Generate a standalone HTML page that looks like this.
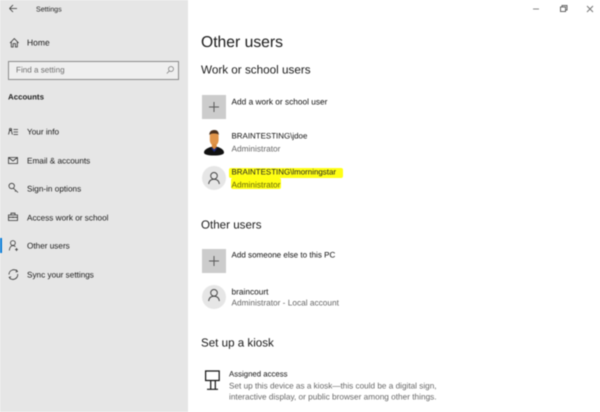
<!DOCTYPE html>
<html><head><meta charset="utf-8"><style>
html,body{margin:0;padding:0;width:600px;height:412px;overflow:hidden;background:#fff}
#r{position:relative;width:600px;height:412px;overflow:hidden;font-family:"Liberation Sans",sans-serif;filter:blur(.4px);text-rendering:geometricPrecision}
.t{position:absolute;white-space:nowrap;line-height:12px;font-size:8.3px;color:#111;transform:translateY(-5.3px)}
.n{left:27px;font-size:8.2px;color:#1a1a1a}
.s{color:#666}
.h{left:201px;font-size:11.6px;color:#1a1a1a;line-height:14px;transform:translateY(-6.3px)}
.u{font-size:7.95px}
.b{position:absolute}
svg{position:absolute;overflow:visible;fill:none}
</style></head><body><div id="r">
<div class="b" style="left:0;top:0;width:188px;height:412px;background:#e6e6e6"></div>
<svg style="left:0;top:0" width="188" height="300" stroke="#333" stroke-width="0.8">
<path d="M9.5 8.5H17M9.5 8.5L13 5M9.5 8.5L13 12"/>
<path d="M10 43L14.3 38.6L18.6 43M11.3 42V47H13.2V43.5H15.4V47H17.3V42"/>
<path d="M8.5 134.5L9.7 130H11.2L12.4 134.5M9.4 129.5a1.1 1.1 0 1 0 2.2 0a1.1 1.1 0 1 0-2.2 0M13.5 129.5H18M13.5 132H18M13.5 134.5H18"/>
<path d="M8.5 157.5H17.5V163.5H8.5ZM8.5 157.5L13 161L17.5 157.5"/>
<path d="M9 186a2.7 2.7 0 1 0 5.4 0a2.7 2.7 0 1 0-5.4 0M13.6 188.5L18 192.5M16 190.5L15 191.5"/>
<path d="M8.5 215H17.5V220.5H8.5ZM11 215V213.2H15V215M8.5 217.3H17.5M13 216.6V218"/>
<path d="M10.5 243a2.4 2.4 0 1 0 4.8 0a2.4 2.4 0 1 0-4.8 0M9.3 250.5C9.6 247.5 11 245.6 13 245.6C14 245.6 14.8 246 15.4 246.8M15 249.5H18M16.5 248V251"/>
<path d="M9 274.5A4.8 4.8 0 0 1 17 271M17.7 274A4.8 4.8 0 0 1 9.6 278M16.2 269.8L17.5 271.5L15.6 272M10.5 279L9.2 277.3L11.1 276.8"/>
</svg>
<div class="t" style="left:36px;top:9px;font-size:7.1px;color:#222">Settings</div>
<div class="t n" style="top:42px;font-size:8.5px">Home</div>
<div class="b" style="left:8px;top:61px;width:169px;height:17px;background:#efefef;border:1px solid #8c8c8c"></div>
<div class="t" style="left:16px;top:69.5px;color:#6e6e6e;font-size:8.1px">Find a setting</div>
<svg style="left:0;top:0" width="188" height="90" stroke="#777" stroke-width="0.7"><path d="M168.5 69a2.5 2.5 0 1 0 5 0a2.5 2.5 0 1 0-5 0M169.3 71L166.8 73.5"/></svg>
<div class="t" style="left:8px;top:97px;font-size:7.9px;font-weight:bold;color:#222">Accounts</div>
<div class="t n" style="top:132px">Your info</div>
<div class="t n" style="top:160.5px">Email &amp; accounts</div>
<div class="t n" style="top:189px">Sign-in options</div>
<div class="t n" style="top:217.5px">Access work or school</div>
<div class="t n" style="top:246px">Other users</div>
<div class="t n" style="top:274.5px">Sync your settings</div>
<div class="b" style="left:0;top:238px;width:1.5px;height:15px;background:#0078d7"></div>

<svg style="left:500px;top:0" width="100" height="20" stroke="#666" stroke-width="1">
<path d="M33 9H39" stroke="#888"/><path d="M60.5 7H65.5V11.5H60.5ZM62 7V5.5H67V10H65.5"/><path d="M87 6L93 12M93 6L87 12" stroke="#777"/></svg>

<div class="t h" style="top:42px;font-size:15.7px;line-height:20px;transform:translateY(-9px)">Other users</div>
<div class="t h" style="top:70px;font-size:11.7px">Work or school users</div>

<div class="b" style="left:202px;top:95px;width:24px;height:24px;background:#cccccc"></div>
<div class="b" style="left:202px;top:249px;width:24px;height:24px;background:#cccccc"></div>
<div class="b" style="left:202px;top:285px;width:24px;height:24px;border-radius:50%;background:#e6e6e6"></div>
<svg style="left:0;top:0" width="600" height="412" stroke="#5a5a5a" stroke-width="1"><path d="M209 107H219M214 102V112"/><path d="M209 261H219M214 256V266"/></svg>
<div class="t" style="left:231.5px;top:100.5px">Add a work or school user</div>

<svg style="left:0;top:0" width="240" height="170" stroke="none">
<path d="M204 152.5C204 149.5 208 148 210.5 147H218C220.5 148 224 149.5 224 152.5C224 154.5 220 155.5 214 155.5C208 155.5 204 154.5 204 152.5Z" fill="#111"/>
<path d="M211 148L214.2 152L217.5 148Z" fill="#1f2a78"/>
<path d="M209.3 135C209.3 131 212 130 214.5 130C217 130 218.8 131.5 218.8 135L217.5 134H211Z" fill="#4a2f1c"/>
<path d="M209.8 135.5C210.5 133.5 212 133.5 214.2 133.5C216.5 133.5 218 133.8 218.6 135.5V140C218.6 143 216.5 146 214.2 146C212 146 209.8 143 209.8 140Z" fill="#e0944a"/>
<path d="M211.5 146.5L214.2 149.5L217 146.5L216 144H212.5Z" fill="#d98a3e"/>
</svg>
<div class="t u" style="left:231.5px;top:136px">BRAINTESTING\jdoe</div>
<div class="t s" style="left:231.5px;top:147.5px">Administrator</div>

<div class="b" style="left:229px;top:168px;width:114px;height:10px;background:#ffff14;border-radius:2px"></div>
<div class="b" style="left:231px;top:177.5px;width:50px;height:11.5px;background:#ffff14;border-radius:2px"></div>
<div class="b" style="left:202px;top:166px;width:24px;height:24px;border-radius:50%;background:#e6e6e6"></div>
<svg style="left:0;top:0" width="240" height="320" stroke="#444" stroke-width="1"><path d="M210.7 175.8a3.3 3.3 0 1 0 6.6 0a3.3 3.3 0 1 0-6.6 0M208.6 184C209 181 211 179.3 214 179.3C217 179.3 219 181 219.4 184"/><path d="M210.7 292.8a3.3 3.3 0 1 0 6.6 0a3.3 3.3 0 1 0-6.6 0M208.6 301C209 298 211 296.3 214 296.3C217 296.3 219 298 219.4 301"/></svg>
<div class="t u" style="left:231.5px;top:172px;color:#222">BRAINTESTING\lmorningstar</div>
<div class="t" style="left:231.5px;top:183.5px;color:#6b6b0a">Administrator</div>

<div class="t h" style="top:224.5px">Other users</div>
<div class="t" style="left:231.5px;top:255px;font-size:8.05px">Add someone else to this PC</div>
<div class="t" style="left:231.5px;top:291px">braincourt</div>
<div class="t s" style="left:231.5px;top:302px">Administrator - Local account</div>

<div class="t h" style="top:343px">Set up a kiosk</div>
<svg style="left:0;top:0" width="240" height="412" stroke="#111" stroke-width="1.2"><path d="M205.6 371H219.2V380.5H205.6ZM210.7 380.5V389M215.3 380.5V389M207 389.3H218"/></svg>
<div class="t" style="left:229px;top:374px;font-size:7.8px">Assigned access</div>
<div class="t s" style="left:229px;top:385.5px;font-size:8.2px">Set up this device as a kiosk—this could be a digital sign,</div>
<div class="t s" style="left:229px;top:396.5px;font-size:8.25px">interactive display, or public browser among other things.</div>
</div></body></html>
